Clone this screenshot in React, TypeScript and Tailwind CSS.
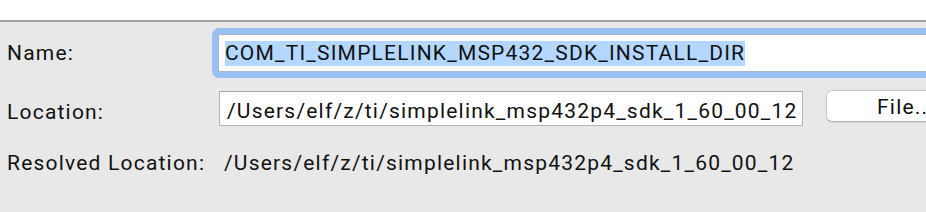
import React from 'react';

const NAME = 'COM_TI_SIMPLELINK_MSP432_SDK_INSTALL_DIR';
const LOCATION = '/Users/elf/z/ti/simplelink_msp432p4_sdk_1_60_00_12';

export default function App() {
  return (
    <div className="w-[926px] h-[212px] overflow-hidden bg-white font-['Roboto',sans-serif] text-[21px] leading-[24px] tracking-[1.2px] text-[#111]">
      <div className="h-[20px] bg-white" />
      <div className="h-[2px] bg-[#a2a2a2]" />

      <div className="w-[1000px] h-[190px] bg-[#e8e8e8] flex flex-col">
        {/* Name */}
        <div className="flex items-center mt-[6px] h-[50px]">
          <div className="w-[212px] pl-[7px] shrink-0">Name:</div>
          <div className="w-[774px] h-[50px] p-[6px] rounded-[7px] bg-[#98c0f0] shrink-0">
            <div className="h-[38px] bg-white border border-[#a9b9cc] flex items-center pl-[6px]">
              <span className="bg-[#b3d7ff] leading-[25px] whitespace-nowrap">{NAME}</span>
            </div>
          </div>
        </div>

        {/* Location */}
        <div className="flex items-start mt-[12px]">
          <div className="w-[212px] pl-[7px] pt-[10px] shrink-0">Location:</div>
          <div className="ml-[7px] mt-[1px] w-[584px] h-[35px] shrink-0 bg-white border border-[#b4b4b4] border-t-[#a8a8a8] pl-[7px] pt-[7px] whitespace-nowrap overflow-hidden">
            {LOCATION}
          </div>
          <button className="ml-[23px] w-[160px] h-[32px] shrink-0 rounded-[6px] bg-white border border-[#c6c6c6] border-b-[#b0b0b0] shadow-[0_1px_0_rgba(0,0,0,0.08)] text-center pt-[1px] tracking-[1.2px]">
            File...
          </button>
        </div>

        {/* Resolved Location */}
        <div className="flex items-start mt-[25px]">
          <div className="w-[224px] pl-[7px] shrink-0">Resolved Location:</div>
          <div className="whitespace-nowrap">{LOCATION}</div>
        </div>
      </div>
    </div>
  );
}
